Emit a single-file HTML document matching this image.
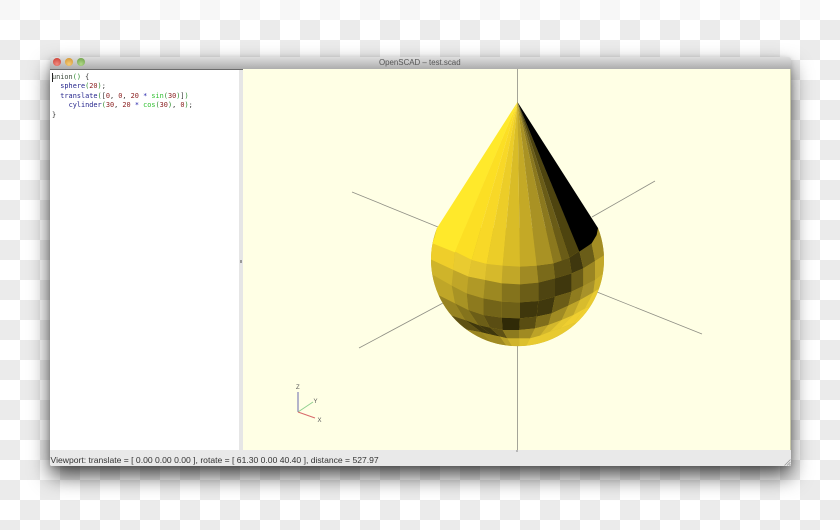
<!DOCTYPE html>
<html>
<head>
<meta charset="utf-8">
<style>
html,body{margin:0;padding:0;width:840px;height:530px;overflow:hidden;background:#fff}
#bg{position:absolute;left:0;top:0;width:840px;height:530px;
background-color:#fff;
background-image:linear-gradient(45deg,#ebebeb 25%,transparent 25%,transparent 75%,#ebebeb 75%),linear-gradient(45deg,#ebebeb 25%,transparent 25%,transparent 75%,#ebebeb 75%);
background-size:40px 40px;background-position:0 20px,20px 0}
#top{position:absolute;left:0;top:0;width:840px;height:20px;background:rgba(255,255,255,.6)}
#win{position:absolute;left:50px;top:57px;width:741px;height:409px;border-radius:3px 3px 2px 2px;background:#e8e8e8;box-shadow:0 10px 20px rgba(0,0,0,.7),0 1px 6px rgba(0,0,0,.15);overflow:hidden;filter:blur(.35px)}
#title{position:absolute;left:0;top:0;width:741px;height:12px;background:linear-gradient(#dedede,#adadad);border-bottom:1px solid #6b6b6b;font:7.9px/11px "Liberation Sans",sans-serif;color:#555;text-align:center}
#title span{position:absolute;left:329px;top:0;white-space:nowrap}
.dot{position:absolute;top:1px;width:8px;height:8px;border-radius:50%;box-sizing:border-box}
#editor{position:absolute;left:0;top:13px;width:189px;height:380px;background:#fff;font:6.88px/9.4px "DejaVu Sans Mono",monospace;color:#333}
#editor pre{margin:0;position:absolute;left:2px;top:3px;font:inherit;white-space:pre}
#cursor{position:absolute;left:2px;top:3px;width:1px;height:9px;background:#222}
.k{color:#24248c}.p{color:#2a8a2a}.n{color:#8a2020}.f{color:#2fc02f}.o{color:#2020aa}
#split{position:absolute;left:189px;top:13px;width:4px;height:380px;background:#e6e6e6}
#grip{position:absolute;left:1px;top:190px;width:2px;height:3px;background:#999}
#view{position:absolute;left:193px;top:12px;width:547px;height:381px;background:#ffffe5;border-right:1px solid #c9c9a8}
#status{position:absolute;left:0;top:393px;width:741px;height:16px;background:#e9e9e9;font:8.58px/15px "Liberation Sans",sans-serif;color:#333;white-space:nowrap}
#status span{position:absolute;left:.5px;top:3px}
#svg{position:absolute;left:0;top:0;filter:blur(.3px)}
</style>
</head>
<body>
<div id="bg"></div>
<div id="top"></div>
<div id="win">
  <div id="title"><span>OpenSCAD – test.scad</span>
    <div class="dot" style="left:3px;background:radial-gradient(circle at 50% 75%,#f08a7e,#c9362c)"></div>
    <div class="dot" style="left:15px;background:radial-gradient(circle at 50% 75%,#f4cb78,#d0902a)"></div>
    <div class="dot" style="left:26.5px;background:radial-gradient(circle at 50% 75%,#b0d888,#689c42)"></div>
  </div>
  <div id="editor"><pre><span style="color:#3c4a3c">union</span><span class="p">()</span> {
  <span class="k">sphere</span><span class="p">(</span><span class="n">20</span><span class="p">)</span>;
  <span class="k">translate</span><span class="p">(</span>[<span class="n">0</span>, <span class="n">0</span>, <span class="n">20</span> <span class="o">*</span> <span class="f">sin</span><span class="p">(</span><span class="n">30</span><span class="p">)</span>]<span class="p">)</span>
    <span class="k">cylinder</span><span class="p">(</span><span class="n">30</span>, <span class="n">20</span> <span class="o">*</span> <span class="f">cos</span><span class="p">(</span><span class="n">30</span><span class="p">)</span>, <span class="n">0</span><span class="p">)</span>;
}</pre><div id="cursor"></div></div>
  <div id="split"><div id="grip"></div></div>
  <div id="view"></div>
  <div id="status"><span>Viewport: translate = [ 0.00 0.00 0.00 ], rotate = [ 61.30 0.00 40.40 ], distance = 527.97</span></div>
  <svg style="position:absolute;right:0;bottom:0" width="8" height="8"><path d="M7.5 1.5L1.5 7.5M7.5 4L4 7.5M7.5 6L6 7.5" stroke="#999" stroke-width=".8"/></svg>
</div>
<svg id="svg" width="840" height="530" viewBox="0 0 840 530">
  <defs><clipPath id="c"><path d="M51 39A259.5 259.5 0 1 0 534 39Z"/></clipPath></defs>
  <g stroke="#8f8f85" stroke-width=".8" fill="none">
    <path d="M517.5 69V450M352 192L438 227M655 181L592 217M359 348L443 303M702 334L597 292"/>
  </g>
  <g transform="translate(420 215) scale(.33333)">
    <path d="M51 39A259.5 259.5 0 1 0 534 39Z" fill="#c9ae2a"/>
    <g clip-path="url(#c)">
      <!-- R0 -->
      <polygon fill="#efce2a" points="20,60 105,110 100,165 25,130"/>
      <polygon fill="#e9cb30" points="105,110 155,135 145,185 100,165"/>
      <polygon fill="#e2c42e" points="155,135 200,147 195,195 145,185"/>
      <polygon fill="#d6b92b" points="200,147 248,152 245,205 195,195"/>
      <polygon fill="#c1a728" points="248,152 300,155 300,208 245,205"/>
      <polygon fill="#a08a23" points="300,155 350,152 355,203 300,208"/>
      <polygon fill="#7a6a1a" points="350,152 400,145 405,190 355,203"/>
      <polygon fill="#5a4e13" points="400,145 448,128 455,175 405,190"/>
      <polygon fill="#3f370e" points="448,128 478,108 490,160 455,175"/>
      <polygon fill="#6a5d18" points="478,108 515,85 525,138 490,160"/>
      <polygon fill="#a38d24" points="515,85 530,60 534,30 570,30 570,110 525,138"/>
      <!-- R1 -->
      <polygon fill="#cfb42a" points="25,130 100,165 95,212 30,175"/>
      <polygon fill="#c0a628" points="100,165 145,185 140,235 95,212"/>
      <polygon fill="#b09926" points="145,185 195,195 190,250 140,235"/>
      <polygon fill="#9c8821" points="195,195 245,205 245,260 190,250"/>
      <polygon fill="#84731c" points="245,205 300,208 300,262 245,260"/>
      <polygon fill="#6b5d17" points="300,208 355,203 355,258 300,262"/>
      <polygon fill="#4e4411" points="355,203 405,190 405,245 355,258"/>
      <polygon fill="#3f370d" points="405,190 455,175 455,230 405,245"/>
      <polygon fill="#6a5c17" points="455,175 490,160 490,213 455,230"/>
      <polygon fill="#9a8522" points="490,160 525,138 525,195 490,213"/>
      <polygon fill="#c2a82a" points="525,138 570,110 570,160 525,195"/>
      <!-- R2 -->
      <polygon fill="#bfa628" points="30,175 95,212 105,265 45,235"/>
      <polygon fill="#a89324" points="95,212 140,235 145,285 105,265"/>
      <polygon fill="#8d7a1e" points="140,235 190,250 190,300 145,285"/>
      <polygon fill="#736418" points="190,250 245,260 245,308 190,300"/>
      <polygon fill="#6e6017" points="245,260 300,262 300,310 245,308"/>
      <polygon fill="#3f370c" points="300,262 355,258 350,305 300,310"/>
      <polygon fill="#40380d" points="355,258 405,245 395,295 350,305"/>
      <polygon fill="#6b5d17" points="405,245 455,230 445,272 395,295"/>
      <polygon fill="#8f7c1f" points="455,230 490,213 480,255 445,272"/>
      <polygon fill="#a8922a" points="490,213 525,195 520,232 480,255"/>
      <polygon fill="#cdb22a" points="525,195 570,160 570,200 520,232"/>
      <!-- R3 -->
      <polygon fill="#978321" points="45,235 105,265 135,315 75,295"/>
      <polygon fill="#84731c" points="105,265 145,285 175,330 135,315"/>
      <polygon fill="#6c5e17" points="145,285 190,300 210,338 175,330"/>
      <polygon fill="#5a4d13" points="190,300 245,308 248,345 210,338"/>
      <polygon fill="#302a07" points="245,308 300,310 298,345 248,345"/>
      <polygon fill="#594d12" points="300,310 350,305 345,340 298,345"/>
      <polygon fill="#7f6e1b" points="350,305 395,295 385,330 345,340"/>
      <polygon fill="#a08b23" points="395,295 445,272 425,315 385,330"/>
      <polygon fill="#bea528" points="445,272 480,255 460,300 425,315"/>
      <polygon fill="#d8bc2d" points="480,255 520,232 495,280 460,300"/>
      <polygon fill="#e8ca30" points="520,232 570,200 560,260 495,280"/>
      <!-- R4 -->
      <polygon fill="#5e5114" points="75,295 135,315 185,352 120,340"/>
      <polygon fill="#3f370d" points="135,315 175,330 215,360 185,352"/>
      <polygon fill="#3f370d" points="175,330 210,338 240,365 215,360"/>
      <polygon fill="#5e5114" points="210,338 248,345 262,370 240,365"/>
      <polygon fill="#8c7a1e" points="248,345 298,345 298,370 262,370"/>
      <polygon fill="#a08a22" points="298,345 345,340 330,370 298,370"/>
      <polygon fill="#bca328" points="345,340 385,330 360,362 330,370"/>
      <polygon fill="#d3b72c" points="385,330 425,315 390,350 360,362"/>
      <polygon fill="#e6c82f" points="425,315 460,300 420,340 390,350"/>
      <polygon fill="#efcf30" points="460,300 495,280 460,325 420,340"/>
      <polygon fill="#f0d030" points="495,280 560,260 520,310 460,325"/>
      <!-- R5 -->
      <polygon fill="#9a8520" points="120,340 185,352 235,400 170,400"/>
      <polygon fill="#a08a22" points="185,352 240,365 265,400 235,400"/>
      <polygon fill="#bba228" points="240,365 262,370 280,400 265,400"/>
      <polygon fill="#d0b42b" points="262,370 298,370 298,400 280,400"/>
      <polygon fill="#dcc02e" points="298,370 330,370 315,400 298,400"/>
      <polygon fill="#e8ca30" points="330,370 360,362 390,350 420,340 460,325 520,310 520,400 315,400"/>
    </g>
    <!-- cone -->
    <polygon fill="#ffe92b" points="292.5,-339 51,39 38,85 105,112"/>
    <polygon fill="#fcdf24" points="292.5,-339 105,110 155,135"/>
    <polygon fill="#f8d827" points="292.5,-339 155,135 200,147"/>
    <polygon fill="#eccd28" points="292.5,-339 200,147 248,152"/>
    <polygon fill="#d9bc27" points="292.5,-339 248,152 300,155"/>
    <polygon fill="#c4a926" points="292.5,-339 300,155 350,152"/>
    <polygon fill="#a99224" points="292.5,-339 350,152 400,145"/>
    <polygon fill="#8b781e" points="292.5,-339 400,145 425,137"/>
    <polygon fill="#6a5c17" points="292.5,-339 425,137 448,128"/>
    <polygon fill="#4e440f" points="292.5,-339 448,128 478,108"/>
    <polygon fill="#000" points="292.5,-339 534,39 530,60 515,85 478,110"/>
  </g>
  <g fill="none" stroke-width="1">
    <path d="M298 392V412" stroke="#6a6ab0"/>
    <path d="M298 412L313 402" stroke="#8fd08f"/>
    <path d="M298 412L315 418" stroke="#d86a6a"/>
  </g>
  <g font-family="Liberation Sans, sans-serif" font-size="6" fill="#555">
    <text x="296" y="389">Z</text>
    <text x="313.5" y="403">Y</text>
    <text x="317.5" y="422">X</text>
  </g>
  <path d="M516 451H518" stroke="#888" stroke-width="1"/>
</svg>
</body>
</html>
